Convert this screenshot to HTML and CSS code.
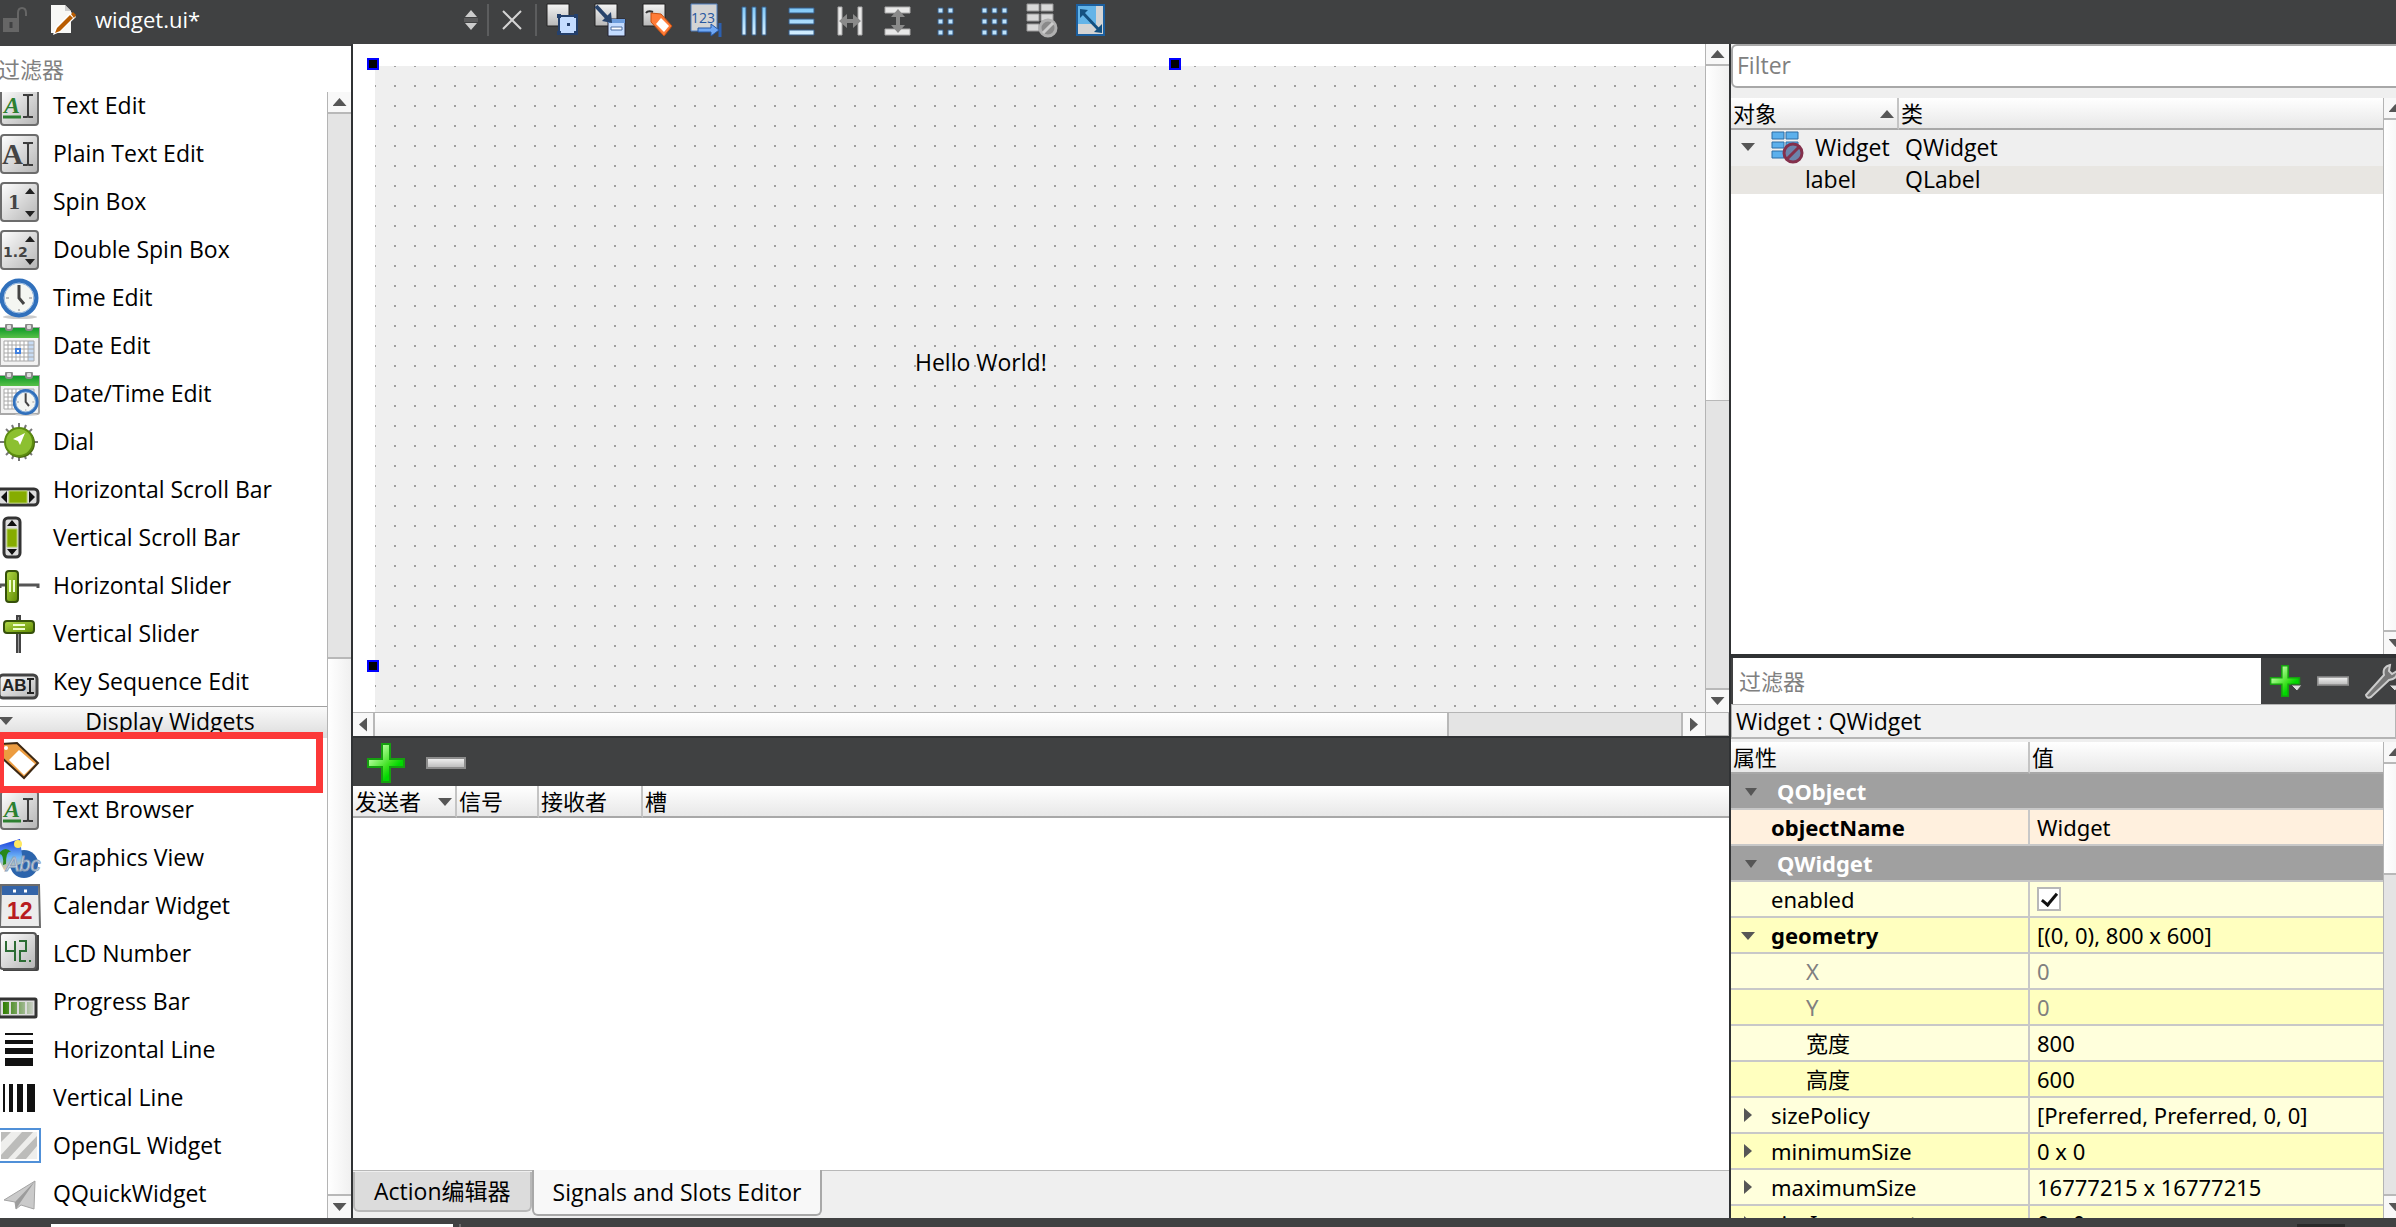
FILE: index.html
```html
<!DOCTYPE html>
<html lang="zh-CN">
<head>
<meta charset="utf-8">
<title>widget.ui - Designer</title>
<link rel="stylesheet" href="styles.css">
</head>
<body>
<svg class="defs" aria-hidden="true">
  <defs>
    <linearGradient id="g-box" x1="0" y1="0" x2="1" y2="1"><stop offset="0" stop-color="#ffffff"/><stop offset="1" stop-color="#b4b4b4"/></linearGradient>
    <linearGradient id="g-green" x1="0" y1="0" x2="1" y2="1"><stop offset="0" stop-color="#b4dc4a"/><stop offset="1" stop-color="#5f8a00"/></linearGradient>
    <linearGradient id="g-plus" x1="0" y1="0" x2="1" y2="1"><stop offset="0.2" stop-color="#b8ffa0"/><stop offset="0.55" stop-color="#3ce020"/><stop offset="0.7" stop-color="#00d800"/></linearGradient>
    <linearGradient id="g-grey" x1="0" y1="0" x2="0" y2="1"><stop offset="0" stop-color="#f4f4f4"/><stop offset="1" stop-color="#b8b8b8"/></linearGradient>
    <linearGradient id="g-blue" x1="0" y1="0" x2="0" y2="1"><stop offset="0" stop-color="#7fc8f8"/><stop offset="1" stop-color="#d8f0ff"/></linearGradient>
    <linearGradient id="g-cal" x1="0" y1="0" x2="0" y2="1"><stop offset="0" stop-color="#0f9a28"/><stop offset="1" stop-color="#58c048"/></linearGradient>
    <linearGradient id="g-sky" x1="0" y1="0" x2="0" y2="1"><stop offset="0" stop-color="#1438d8"/><stop offset="0.6" stop-color="#70b8f8"/><stop offset="1" stop-color="#e8c890"/></linearGradient>
    <linearGradient id="g-prog" gradientUnits="userSpaceOnUse" x1="3" y1="0" x2="33" y2="0"><stop offset="0" stop-color="#2f7d00"/><stop offset="1" stop-color="#c8cec4"/></linearGradient>
    <symbol id="frame" viewBox="0 0 42 44"><rect x="1" y="3" width="37" height="38" rx="3" fill="url(#g-box)" stroke="#6c6c6c" stroke-width="2"/></symbol>
    <symbol id="ibeam" viewBox="0 0 42 44"><path d="M23 11h4l1 1 1-1h4M28 11v21M23 33h4l1-1 1 1h4" fill="none" stroke="#3c3c3c" stroke-width="2"/></symbol>
    <symbol id="textedit" viewBox="0 0 42 44"><use href="#frame"/><text x="4" y="29" class="glyph-a green">A</text><path d="M3 33h18" stroke="#2c8030" stroke-width="3"/><use href="#ibeam"/></symbol>
    <symbol id="calbase" viewBox="0 0 42 44"><path d="M0 4h39v36q0 2-2 2H0z" fill="#f2f2f2" stroke="#a8a8a8" stroke-width="2"/><path d="M0 4h39v10H0z" fill="url(#g-cal)"/><rect x="6" y="0" width="6" height="6" rx="2" fill="#ddd" stroke="#8a8a8a" stroke-width="2"/><rect x="26" y="0" width="6" height="6" rx="2" fill="#ddd" stroke="#8a8a8a" stroke-width="2"/><path d="M4 17h30v20H4z" fill="#fff"/><path d="M28 17h6v20h-6z" fill="#c8dcf4"/><path d="M4 17h30M4 21h30M4 25h30M4 29h30M4 33h30M4 37h30M4 17v20M8 17v20M12 17v20M16 17v20M20 17v20M24 17v20M28 17v20M34 17v20" stroke="#a8a8a8" stroke-width="1"/></symbol>
    <symbol id="clock" viewBox="0 0 42 44"><ellipse cx="20" cy="41" rx="17" ry="2" fill="#ccc"/><circle cx="19" cy="22" r="17" fill="#f4f6f2" stroke="#3070bc" stroke-width="5"/><circle cx="19" cy="22" r="15" fill="none" stroke="#a8c4e4" stroke-width="1"/><path d="M19 9v13l5 6" fill="none" stroke="#444" stroke-width="3"/><path d="M6 22h3M29 22h3M19 35v-2" stroke="#bbb" stroke-width="2"/></symbol>
    <symbol id="plus" viewBox="0 0 40 40"><path d="M16 1h8v15h14v8H24v15h-8V24H2v-8h14z" fill="url(#g-plus)" stroke="#16a010" stroke-width="2"/></symbol>
    <symbol id="minus" viewBox="0 0 40 40"><rect x="1" y="15" width="38" height="10" fill="url(#g-grey)" stroke="#8c8c8c" stroke-width="2"/></symbol>
  </defs>
</svg>

<header class="topbar">
  <svg class="lock" viewBox="0 0 26 28"><path d="M15 12V7q0-5 4-5t4 5v3" fill="none" stroke="#666" stroke-width="2"/><rect x="0" y="12" width="16" height="14" fill="#666"/><path d="M8 16v6" stroke="#404142" stroke-width="3"/></svg>
  <svg class="file" viewBox="0 0 28 32"><path d="M1 1h14l6 6v22H1z" fill="#f8f8f6"/><path d="M15 1v6h6" fill="#ccc"/><path d="M3 31l2-7L21 8l5 5L10 28z" fill="#fff"/><path d="M5 29l2-5L20 11l3 3L10 27z" fill="#b85c00"/><path d="M21 10l2-2 3 3-2 3z" fill="#b85c00"/></svg>
  <span class="filename">widget.ui*</span>
  <svg class="updown" viewBox="0 0 14 20"><path d="M7 0l6 7H1z M7 20l6-7H1z" fill="#ccc"/><path d="M0 9h14M0 11h14" stroke="#777" stroke-width="1"/></svg>
  <span class="vsep"></span>
  <button class="close" aria-label="关闭"><svg viewBox="0 0 20 20"><path d="M1 1l18 18M19 1L1 19" stroke="#d4d4d4" stroke-width="2"/></svg></button>
  <span class="vsep"></span>
  <nav class="tools">
    <button aria-label="编辑控件"><svg viewBox="0 0 32 32"><path d="M2 1h22v22H2z" fill="url(#g-grey)" stroke="#222"/><path d="M14 13h18v18H14z" fill="#c4dcff" stroke="#24406c" stroke-width="2"/><path d="M22 20h3v3h-3z" fill="#24406c"/><path d="M12 11h4v4h-4zM29 11h4v4h-4zM12 28h4v4h-4zM29 28h4v4h-4z" fill="#24406c"/></svg></button>
    <button aria-label="编辑信号/槽"><svg viewBox="0 0 32 32"><path d="M2 1h22v22H2z" fill="url(#g-grey)" stroke="#222"/><path d="M15 16h17v17H15z" fill="#c4dcff" stroke="#223" stroke-width="1"/><path d="M15 16h17v4H15z" fill="#6c9cdc"/><path d="M18 24h11v3H18z" fill="#fff" stroke="#4a6ca0"/><path d="M3 3l13 14" stroke="#28446c" stroke-width="4"/><path d="M19 20l-1-11-9 9z" fill="#28446c"/></svg></button>
    <button aria-label="编辑伙伴"><svg viewBox="0 0 32 32"><path d="M2 1h22v22H2z" fill="url(#g-grey)" stroke="#222"/><path d="M5 10q2-3 7-1" fill="none" stroke="#333" stroke-width="2"/><path d="M10 10l10 1 11 12-8 10-13-14z" fill="#ff7c38" stroke="#c85010"/><path d="M20 15l8 8-5 6-8-8z" fill="#fff"/></svg></button>
    <button aria-label="编辑Tab顺序"><svg viewBox="0 0 32 32"><path d="M2 1h26v27H2z" fill="#d4d4d4" stroke="#5080c0"/><text x="2" y="20" class="glyph-123">123</text><path d="M9 25h13v-4l8 6-8 6v-4H9z" fill="#70a8f4" stroke="#2458a8"/><path d="M31 20v14" stroke="#2c60b0" stroke-width="3"/></svg></button>
    <button aria-label="水平布局"><svg viewBox="0 0 32 32"><path d="M5 4h4v28H5zM15 4h4v28h-4zM25 4h4v28h-4z" fill="url(#g-blue)" stroke="#345c88"/></svg></button>
    <button aria-label="垂直布局"><svg viewBox="0 0 32 32"><path d="M4 5h25v5H4zM4 16h25v5H4zM4 27h25v5H4z" fill="url(#g-blue)" stroke="#345c88"/></svg></button>
    <button aria-label="水平分裂器"><svg viewBox="0 0 32 32"><path d="M5 4h4v28H5zM25 4h4v28h-4z" fill="#e8e8e8" stroke="#aaa"/><path d="M6 18l8-7v5h6v-5l8 7-8 7v-5h-6v5z" fill="#8a8a8a"/></svg></button>
    <button aria-label="垂直分裂器"><svg viewBox="0 0 32 32"><path d="M4 4h25v6H4zM4 26h25v6H4z" fill="#e8e8e8" stroke="#aaa"/><path d="M17 6l7 8h-5v8h5l-7 8-7-8h5v-8h-5z" fill="#8a8a8a"/></svg></button>
    <button aria-label="表单布局"><svg viewBox="0 0 32 32"><path d="M9 5h5v5H9zM19 5h5v5h-5zM9 16h5v5H9zM19 16h5v5h-5zM9 27h5v5H9zM19 27h5v5h-5z" fill="#c0e4fc" stroke="#345c88"/></svg></button>
    <button aria-label="栅格布局"><svg viewBox="0 0 32 32"><path d="M5 5h5v5H5zM15 5h5v5h-5zM25 5h5v5h-5zM5 16h5v5H5zM15 16h5v5h-5zM25 16h5v5h-5zM5 27h5v5H5zM15 27h5v5h-5zM25 27h5v5h-5z" fill="#c0e4fc" stroke="#345c88"/></svg></button>
    <button aria-label="打破布局"><svg viewBox="0 0 32 32"><path d="M2 1h12v7H2zM16 1h12v7H16zM2 11h12v7H2zM16 11h12v7H16zM2 21h12v7H2z" fill="#d8d8d8" stroke="#999"/><circle cx="23" cy="25" r="8" fill="#8a8a8a" stroke="#b0b0b0" stroke-width="3"/><path d="M18 30l10-10" stroke="#ccc" stroke-width="3"/></svg></button>
    <button aria-label="调整大小"><svg viewBox="0 0 32 32"><path d="M4 2h27v30H4z" fill="#d4d4d4" stroke="#1c60a0" stroke-width="2"/><path d="M5 3h18v18H5z" fill="#64b4e8"/><path d="M9 9l18 19" stroke="#145080" stroke-width="3"/><path d="M7 6v9l8-8zM29 30v-9l-8 8z" fill="#145080"/></svg></button>
  </nav>
</header>

<main class="workspace">
  <aside class="palette">
    <input class="palette-filter" type="text" placeholder="过滤器" aria-label="过滤器">
    <div class="palette-body">
      <div class="palette-view">
        <ul class="widgets scrolled">
          <li><svg class="wi" viewBox="0 0 42 44"><use href="#textedit"/></svg>Text Edit</li>
          <li><svg class="wi" viewBox="0 0 42 44"><use href="#frame"/><text x="2" y="32" class="glyph-a plain">A</text><use href="#ibeam"/></svg>Plain Text Edit</li>
          <li><svg class="wi" viewBox="0 0 42 44"><use href="#frame"/><text x="8" y="29" class="glyph-n">1</text><path d="M25 14l5-6 5 6zM25 31l5 6 5-6z" fill="#222"/></svg>Spin Box</li>
          <li><svg class="wi" viewBox="0 0 42 44"><use href="#frame"/><text x="3" y="29" class="glyph-s">1.2</text><path d="M25 14l5-6 5 6zM25 31l5 6 5-6z" fill="#222"/></svg>Double Spin Box</li>
          <li><svg class="wi" viewBox="0 0 42 44"><use href="#clock"/></svg>Time Edit</li>
          <li><svg class="wi" viewBox="0 0 42 44"><use href="#calbase"/><path d="M16 25h4v4h-4z" fill="#fff" stroke="#4080e0" stroke-width="2"/></svg>Date Edit</li>
          <li><svg class="wi" viewBox="0 0 42 44"><use href="#calbase"/><svg x="13" y="15" width="28" height="30" viewBox="0 0 42 44"><use href="#clock"/></svg></svg>Date/Time Edit</li>
          <li><svg class="wi" viewBox="0 0 42 44"><path d="M19 3v38M0 22h38M6 9l26 26M6 35L32 9M12 5l14 34M26 5L12 39" stroke="#777" stroke-width="2"/><circle cx="20" cy="23" r="15" fill="#4a6a10"/><circle cx="19" cy="22" r="14" fill="#8cc030" stroke="#5c8c10" stroke-width="2"/><path d="M13 19l12-6-5 12-2-4z" fill="#fff"/></svg>Dial</li>
          <li><svg class="wi" viewBox="0 0 42 44"><rect x="-3" y="21" width="41" height="16" rx="4" fill="#ddd" stroke="#333" stroke-width="3"/><path d="M9 23h18v12H9z" fill="#86ac00" stroke="#b4d060"/><path d="M7 23v12l-6-6zM29 23v12l6-6z" fill="#111"/></svg>Horizontal Scroll Bar</li>
          <li><svg class="wi" viewBox="0 0 42 44"><rect x="4" y="2" width="16" height="39" rx="4" fill="#ddd" stroke="#333" stroke-width="3"/><path d="M7 13h10v18H7z" fill="#86ac00" stroke="#b4d060"/><path d="M7 10h10l-5-6zM7 33h10l-5 6z" fill="#111"/></svg>Vertical Scroll Bar</li>
          <li><svg class="wi" viewBox="0 0 42 44"><path d="M0 24v-3h38v3" fill="none" stroke="#555" stroke-width="3"/><rect x="6" y="7" width="12" height="31" rx="3" fill="url(#g-green)" stroke="#35500a" stroke-width="2"/><path d="M10 16v12M14 16v12" stroke="#f0ffd0" stroke-width="2"/></svg>Horizontal Slider</li>
          <li><svg class="wi" viewBox="0 0 42 44"><path d="M17 41V4h3v37" fill="#999" stroke="#444" stroke-width="2"/><rect x="4" y="9" width="30" height="12" rx="3" fill="url(#g-green)" stroke="#35500a" stroke-width="2"/><path d="M13 13h12M13 17h12" stroke="#f0ffd0" stroke-width="2"/></svg>Vertical Slider</li>
          <li><svg class="wi" viewBox="0 0 42 44"><rect x="-1" y="15" width="38" height="23" rx="4" fill="url(#g-box)" stroke="#444" stroke-width="3"/><text x="2" y="31" class="glyph-k">AB</text><path d="M27 19h7M30 19v14M27 33h7" fill="none" stroke="#222" stroke-width="2"/></svg>Key Sequence Edit</li>
        </ul>
        <h2 class="category"><i class="tri down"></i><span>Display Widgets</span></h2>
        <ul class="widgets">
          <li><svg class="wi" viewBox="0 0 42 44"><path d="M1 4l16-1 21 20-14 15L1 17z" fill="#ec9c40" stroke="#3c2814" stroke-width="2"/><path d="M19 10l16 14-11 11L9 20z" fill="#fff"/><circle cx="6" cy="8" r="2" fill="#fff"/></svg>Label</li>
          <li><svg class="wi" viewBox="0 0 42 44"><use href="#textedit"/></svg>Text Browser</li>
          <li><svg class="wi" viewBox="0 0 42 44"><circle cx="24" cy="28" r="14" fill="#2c64ac"/><path d="M0 9l20-6 3 24-19 7-4-8z" fill="url(#g-sky)"/><circle cx="18" cy="8" r="4" fill="#ffe860"/><path d="M0 16q6-6 11 0-5-2-5 12l-3 1q1-10-3-11z" fill="#28881c"/><text x="6" y="35" class="glyph-abc">Abc</text></svg>Graphics View</li>
          <li><svg class="wi" viewBox="0 0 42 44"><path d="M1 1h38l1 42H0z" fill="#ececec" stroke="#6c6c6c" stroke-width="2"/><path d="M2 2h36v9H2z" fill="#3464a8"/><path d="M13 7h3M24 7h3" stroke="#fff" stroke-width="3"/><text x="7" y="35" class="glyph-12">12</text></svg>Calendar Widget</li>
          <li><svg class="wi" viewBox="0 0 42 44"><path d="M3 3h36v34q0 2-2 2H3z" fill="#444"/><rect x="0" y="1" width="36" height="36" rx="3" fill="url(#g-box)" stroke="#555" stroke-width="2"/><path d="M6 9v10h9M15 9v20M19 9h7v10h-6v10h6M29 29h2" fill="none" stroke="#2c6c34" stroke-width="2"/></svg>LCD Number</li>
          <li><svg class="wi" viewBox="0 0 42 44"><rect x="-1" y="19" width="37" height="18" rx="1" fill="#dcdcdc" stroke="#333" stroke-width="3"/><path d="M3 22h6v12H3zM11 22h6v12h-6zM19 22h6v12h-6zM27 22h6v12h-6z" fill="url(#g-prog)"/></svg>Progress Bar</li>
          <li><svg class="wi" viewBox="0 0 42 44"><path d="M5 5h28v2H5zM5 12h28v4H5zM5 20h28v6H5zM5 30h28v8H5z" fill="#111"/></svg>Horizontal Line</li>
          <li><svg class="wi" viewBox="0 0 42 44"><path d="M3 8h2v28H3zM9 8h4v28H9zM17 8h6v28h-6zM27 8h8v28h-8z" fill="#111"/></svg>Vertical Line</li>
          <li><svg class="wi" viewBox="0 0 42 44"><path d="M-2 5h42v33H-2z" fill="#fff" stroke="#5090d8" stroke-width="2"/><path d="M1 8h36v27H1z" fill="#eeeeec"/><path d="M1 18V8h10L1 18M22 8h11L8 35H1v-4zM37 12v10L26 35H15z" fill="#bcbcba"/></svg>OpenGL Widget</li>
          <li><svg class="wi" viewBox="0 0 42 44"><path d="M35 9L4 28l11 2 1 7 5-4 13 4z" fill="#cacaca" stroke="#a4a4a4"/><path d="M35 9L15 30l1 7 4-6z" fill="#9c9c9c"/></svg>QQuickWidget</li>
        </ul>
        <div class="highlight"></div>
      </div>
      <div class="vbar"><span class="cap"><i class="tri up"></i></span><span class="trough palette-trough"></span><span class="thumb"></span><span class="cap end"><i class="tri down"></i></span></div>
    </div>
  </aside>

  <section class="center">
    <div class="canvas">
      <div class="viewport">
        <div class="form"><span class="hello">Hello World!</span></div>
        <i class="handle nw"></i><i class="handle n"></i><i class="handle w"></i>
      </div>
      <div class="vbar"><span class="cap"><i class="tri up"></i></span><span class="thumb canvas-thumb"></span><span class="trough"></span><span class="cap end"><i class="tri down"></i></span></div>
      <div class="hbar"><span class="cap"><i class="tri left"></i></span><span class="thumb"></span><span class="trough"></span><span class="cap end"><i class="tri right"></i></span></div>
      <div class="corner"></div>
    </div>
    <div class="signal-tools">
      <button aria-label="添加"><svg viewBox="0 0 40 40"><use href="#plus"/></svg></button>
      <button aria-label="删除"><svg viewBox="0 0 40 40"><use href="#minus"/></svg></button>
    </div>
    <div class="signal-view">
      <table class="signals">
        <thead><tr><th class="c-sender">发送者<i class="tri down"></i></th><th class="c-signal">信号</th><th class="c-receiver">接收者</th><th>槽</th></tr></thead>
      </table>
    </div>
    <div class="tabs">
      <button class="tab">Action编辑器</button>
      <button class="tab active">Signals and Slots Editor</button>
    </div>
  </section>

  <aside class="inspector">
    <section class="objects">
      <input class="object-filter" type="text" placeholder="Filter" aria-label="Filter">
      <div class="split">
        <div class="view">
          <table class="tree">
            <thead><tr><th class="c-object">对象<i class="tri up"></i></th><th>类</th></tr></thead>
            <tbody>
              <tr class="root"><td><div class="cell"><i class="tri down"></i><svg viewBox="0 0 32 32"><path d="M1 1h12v7H1zM15 1h12v7H15zM1 11h12v6H1zM15 11h12v6H15zM1 20h12v7H1z" fill="#5cb0ec" stroke="#2c6ca4"/><circle cx="22" cy="22" r="9" fill="#6c84ac" stroke="#84304c" stroke-width="3"/><path d="M16 28l12-12" stroke="#84304c" stroke-width="3"/></svg>Widget</div></td><td>QWidget</td></tr>
              <tr class="leaf"><td>label</td><td>QLabel</td></tr>
            </tbody>
          </table>
        </div>
        <div class="vbar"><span class="cap"><i class="tri up"></i></span><span class="thumb"></span><span class="cap end"><i class="tri down"></i></span></div>
      </div>
    </section>
    <div class="prop-tools">
      <input class="prop-filter" type="text" placeholder="过滤器" aria-label="过滤器">
      <button aria-label="添加动态属性"><svg viewBox="0 0 40 40"><use href="#plus" x="4" y="4" width="32" height="32"/><path d="M26 24h11l-5 6z" fill="#ddd" stroke="#404142"/></svg></button>
      <button aria-label="删除动态属性"><svg viewBox="0 0 40 40"><use href="#minus" x="4" y="4" width="32" height="32"/></svg></button>
      <button aria-label="配置"><svg viewBox="0 0 40 40"><path d="M5 34L23 14q-2-8 6-10l-1 6 3 3 5-3q1 8-8 9L10 36q-4 2-5-2z" fill="#777" stroke="#ccc" stroke-width="2"/><path d="M28 24h11l-5 6z" fill="#ddd" stroke="#404142"/></svg></button>
    </div>
    <div class="prop-title">Widget : QWidget</div>
    <div class="split props-split">
      <div class="view">
        <table class="props">
          <thead><tr><th class="c-name">属性</th><th>值</th></tr></thead>
          <tbody>
            <tr class="group"><td colspan="2"><i class="tri down small"></i>QObject</td></tr>
            <tr class="peach"><td><b>objectName</b></td><td>Widget</td></tr>
            <tr class="group"><td colspan="2"><i class="tri down small"></i>QWidget</td></tr>
            <tr><td><label for="enabled">enabled</label></td><td><input id="enabled" type="checkbox" checked></td></tr>
            <tr class="deep"><td><i class="tri down"></i><b>geometry</b></td><td>[(0, 0), 800 x 600]</td></tr>
            <tr class="sub off"><td>X</td><td>0</td></tr>
            <tr class="sub off deep"><td>Y</td><td>0</td></tr>
            <tr class="sub"><td>宽度</td><td>800</td></tr>
            <tr class="sub deep"><td>高度</td><td>600</td></tr>
            <tr><td><i class="tri right"></i>sizePolicy</td><td>[Preferred, Preferred, 0, 0]</td></tr>
            <tr class="deep"><td><i class="tri right"></i>minimumSize</td><td>0 x 0</td></tr>
            <tr><td><i class="tri right"></i>maximumSize</td><td>16777215 x 16777215</td></tr>
            <tr class="deep"><td><i class="tri right"></i>sizeIncrement</td><td>0 x 0</td></tr>
          </tbody>
        </table>
      </div>
      <div class="vbar"><span class="cap"><i class="tri up"></i></span><span class="thumb props-thumb"></span><span class="trough"></span><span class="cap end"><i class="tri down"></i></span></div>
    </div>
  </aside>
</main>

<footer class="bottombar"><input type="text" aria-label="定位"><span class="foot-sep"></span><span class="foot-mark"></span></footer>
</body>
</html>
```
FILE: styles.css
```css
* { box-sizing: border-box; }
body {
  margin: 0;
  height: 100vh;
  display: flex;
  flex-direction: column;
  overflow: hidden;
  background: #404142;
  color: #000;
  font: 23px/28px "Open Sans", "Noto Sans CJK SC", sans-serif;
}
button, input { font: inherit; color: inherit; margin: 0; padding: 0; border: 0; background: none; }
input { border-radius: 0; outline: 0; }
input::placeholder { color: #808080; opacity: 1; }
svg { display: block; overflow: visible; flex: none; }
table { border-spacing: 0; table-layout: fixed; width: 100%; }
th, td { padding: 0; text-align: left; font-weight: 400; white-space: nowrap; }
ul, h2 { margin: 0; padding: 0; list-style: none; }
.defs { position: absolute; width: 0; height: 0; }

.glyph-a { font: bold 24px "Liberation Serif", serif; fill: #444; }
.glyph-a.green { font-style: italic; fill: #2c8030; }
.glyph-a.plain { font-size: 29px; }
.glyph-n { font: bold 18px "DejaVu Serif", serif; fill: #444; }
.glyph-s { font: bold 14px "DejaVu Sans", sans-serif; fill: #444; }
.glyph-k { font: bold 17px "Liberation Sans", sans-serif; fill: #222; }
.glyph-12 { font: bold 23px "Liberation Sans", sans-serif; fill: #b81c20; }
.glyph-123 { font: 14px "Open Sans", sans-serif; fill: #2858a0; }
.glyph-abc { font: italic 20px "Liberation Sans", sans-serif; fill: #dce8f8; stroke: #8ca0b8; stroke-width: 1px; }

.tri { display: inline-block; flex: none; width: 14px; height: 8px; background: #565656; }
.tri.up { clip-path: polygon(50% 0, 100% 100%, 0 100%); }
.tri.down { clip-path: polygon(0 0, 100% 0, 50% 100%); }
.tri.left { width: 8px; height: 14px; clip-path: polygon(100% 0, 100% 100%, 0 50%); }
.tri.right { width: 8px; height: 14px; clip-path: polygon(0 0, 100% 50%, 0 100%); }
.tri.small { width: 12px; }

/* top bar */
.topbar { flex: none; height: 44px; display: flex; align-items: center; padding: 0 0 5px 3px; background: #404142; color: #fff; }
.lock { width: 26px; height: 28px; }
.file { width: 28px; height: 32px; margin-left: 21px; }
.filename { width: 368px; margin-left: 17px; padding-bottom: 2px; font-size: 22px; }
.updown { width: 14px; height: 20px; margin-left: 1px; }
.vsep { width: 2px; height: 32px; background: #5c5d5e; margin-left: 9px; }
.close { margin: 0 4px 0 13px; width: 20px; height: 20px; }
.close svg { width: 20px; height: 20px; }
.tools { display: flex; gap: 16px; margin-left: 8px; }
.tools button { width: 32px; height: 34px; padding-bottom: 2px; }
.tools svg { width: 32px; height: 32px; }

.workspace { flex: 1; min-height: 0; display: grid; grid-template-columns: 351px minmax(0, 1fr) 665px; gap: 2px; background: #303234; }

/* scroll bars */
.vbar { flex: none; width: 24px; display: flex; flex-direction: column; border-left: 1px solid #b4b4b4; background: #f4f4f4; }
.hbar { display: flex; border-top: 1px solid #b4b4b4; background: #f4f4f4; }
.cap { flex: none; display: flex; align-items: center; justify-content: center; background: #f8f8f8; }
.vbar .cap { height: 22px; border-bottom: 2px solid #b8b8b8; }
.vbar .cap.end { height: 24px; border-bottom: 0; border-top: 2px solid #b8b8b8; }
.hbar .cap { width: 22px; border-right: 2px solid #b8b8b8; }
.hbar .cap.end { width: 24px; border-right: 0; border-left: 2px solid #b8b8b8; }
.thumb, .trough { flex: 1; }
.vbar .thumb { background: linear-gradient(90deg, #fff, #f0f0f0); }
.hbar .thumb { flex: 1074; background: linear-gradient(#fff, #f0f0f0); }
.hbar .trough { flex: 232; border-left: 2px solid #b8b8b8; }
.trough { background: #e4e4e4; }

/* widget box */
.palette { display: flex; flex-direction: column; min-height: 0; background: #fff; border-top: 2px solid #404142; }
.palette-filter { height: 46px; width: 349px; text-indent: -2px; font-size: 22px; }
.palette-body { flex: 1; min-height: 0; display: flex; }
.palette-view { position: relative; flex: 1; min-width: 0; overflow: hidden; }
.widgets.scrolled { margin-top: -10px; }
.widgets li { height: 48px; display: flex; align-items: center; gap: 11px; padding-bottom: 2px; white-space: nowrap; }
.wi { width: 42px; height: 44px; margin-top: 2px; }
.category { height: 32px; padding-bottom: 3px; border-top: 1px solid #a0a0a0; display: flex; align-items: center; font-size: 23px; font-weight: 400; overflow: hidden; background: linear-gradient(#fafafa, #dcdcdc); }
.category .tri { margin-left: -1px; }
.category span { flex: 1; text-align: center; }
.highlight { position: absolute; left: -3px; top: 640px; width: 326px; height: 61px; border: 7px solid #fc3838; }
.palette-trough { flex: 543; }
.palette .thumb { flex: 536; border-top: 2px solid #b8b8b8; }

/* form canvas */
.center { display: flex; flex-direction: column; min-height: 0; background: #fff; }
.canvas { flex: 692; min-height: 0; display: grid; grid-template: minmax(0, 1fr) 24px / minmax(0, 1fr) 24px; }
.viewport { position: relative; overflow: hidden; padding: 22px 0 0 22px; background: #fff; }
.form { height: 100%; background: conic-gradient(from 270deg at 2px 2px, #a0a0a0 90deg, #efefef 0) -1px -1px / 20px 20px; }
.hello { position: absolute; left: 562px; top: 304px; }
.handle { position: absolute; width: 12px; height: 12px; background: #000; border: solid #0000ff; border-width: 2px; box-shadow: inset 0 0 0 1px #000; }
.handle.nw { left: 14px; top: 14px; }
.handle.n { left: 816px; top: 14px; }
.handle.w { left: 14px; top: 616px; }
.canvas-thumb { flex: 335; border-bottom: 1px solid #b8b8b8; }
.canvas .vbar .trough { flex: 287; }
.corner { border: 1px solid #b4b4b4; background: #efefef; }

/* signals editor */
.signal-tools { flex: none; height: 50px; display: flex; align-items: center; gap: 20px; padding: 2px 0 0 13px; border-top: 2px solid #303234; background: #404142; }
.signal-tools button, .signal-tools svg { width: 40px; height: 40px; }
.signal-view { flex: 384; min-height: 0; }
th { height: 31px; padding-left: 2px; border-bottom: 2px solid #a8a8a8; border-right: 2px solid #c4c4c4; background: linear-gradient(#fff, #e8e8e8); font-size: 22px; }
th:last-child { border-right: 0; }
th .tri { float: right; margin: 11px 3px 0 0; }
.signals th { height: 32px; }
.signals .c-sender { width: 104px; }
.signals .c-signal { width: 82px; }
.signals .c-receiver { width: 104px; }
.tabs { flex: none; height: 48px; display: flex; align-items: flex-start; border-top: 1px solid #b8b8b8; background: #efefef; }
.tab { height: 40px; margin-top: 1px; padding: 0 19px; border: 2px solid #b8b8b8; border-top: 0; border-radius: 0 0 6px 6px; background: #dcdcdc; }
.tab.active { height: 46px; margin-top: -1px; border-color: #a8a8a8; background: #f8f8f8; }

/* object inspector */
.inspector { display: flex; flex-direction: column; min-width: 0; min-height: 0; overflow: hidden; background: #efefef; }
.objects { flex: 610; min-height: 0; display: flex; flex-direction: column; }
.object-filter { flex: none; height: 44px; margin: 0 -8px 10px 0; padding: 0 4px 2px; border: 2px solid #a8a8a8; border-radius: 6px; background: #fff; }
.split { flex: 1; min-height: 0; display: flex; margin-right: -11px; }
.view { flex: 1; min-width: 0; overflow: hidden; background: #fff; }
.tree .c-object { width: 168px; }
.tree th { height: 32px; }
.tree td { padding: 0 0 2px 6px; }
.tree td:first-child { padding-left: 74px; }
.tree .root td { height: 36px; background: #efefef; }
.tree .root td:first-child { padding-left: 10px; }
.tree .leaf td { height: 28px; line-height: 26px; background: #e8e6e2; }
.cell { display: flex; align-items: center; }
.cell svg { width: 32px; height: 32px; margin: 0 12px 0 16px; }

/* property editor */
.prop-tools { flex: none; height: 50px; display: flex; align-items: center; gap: 8px; padding-left: 2px; border-top: 4px solid #303234; background: #404142; }
.prop-filter { flex: 1; min-width: 0; height: 46px; padding-left: 6px; margin-right: -4px; background: #fff; font-size: 22px; }
.prop-tools svg, .prop-tools button { width: 40px; height: 40px; flex: none; }
.prop-tools button:last-child { margin-right: -5px; }
.prop-title { flex: none; height: 35px; padding: 2px 4px; border: 1px solid #b4b4b4; border-bottom-width: 2px; margin-bottom: 3px; background: #f1f1f1; }
.props-split { flex: 476; }
.props { font-family: "Noto Sans", "Noto Sans CJK SC", sans-serif; font-size: 22px; }
.props th { height: 32px; }
.props .c-name { width: 299px; }
.props td { position: relative; height: 36px; padding-left: 40px; border-bottom: 2px solid #c8c8c8; border-right: 2px solid #c8c8c8; background: #ffffdc; }
.props td:last-child { padding-left: 7px; border-right: 0; }
.props .deep td { background: #ffffbf; }
.props .peach td { background: #fff0de; }
.props .group td { padding-left: 46px; background: #a0a0a0; color: #fff; font-weight: 700; }
.props .sub td:first-child { padding-left: 75px; }
.props .off td { color: #808080; }
.props .tri { position: absolute; left: 10px; top: 14px; }
.props .tri.right { left: 13px; top: 10px; }
.props .tri.small { left: 14px; }
.props input { display: block; appearance: none; width: 24px; height: 24px; border: 2px solid #b8b8b8; background: #fff; }
.props input:checked::before { content: ""; display: block; width: 6px; height: 13px; margin: 1px 0 0 6px; border: solid #111; border-width: 0 3px 3px 0; transform: rotate(40deg); }
.props-thumb { flex: 110; border-bottom: 2px solid #b8b8b8; }
.props-split .trough { flex: 320; }

/* bottom bar */
.bottombar { flex: none; height: 9px; display: flex; align-items: flex-end; padding-left: 51px; background: #404142; overflow: hidden; }
.bottombar input { width: 402px; height: 3px; background: #fff; }
.foot-sep { width: 2px; height: 3px; margin-left: 6px; background: #6c6c6c; }
.foot-mark { width: 48px; height: 3px; margin: 0 51px 0 auto; background: #2a2a2a; }
```
